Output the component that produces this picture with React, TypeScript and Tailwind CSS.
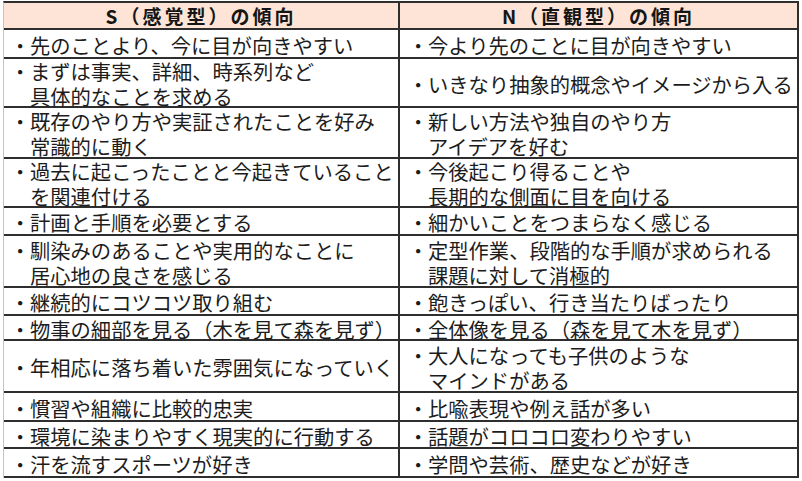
import React from "react";

type Row = { h: number; left: string[]; right: string[] };

const rows: Row[] = [
  { h: 29, left: ["先のことより、今に目が向きやすい"], right: ["今より先のことに目が向きやすい"] },
  { h: 49, left: ["まずは事実、詳細、時系列など", "具体的なことを求める"], right: ["いきなり抽象的概念やイメージから入る"] },
  { h: 51, left: ["既存のやり方や実証されたことを好み", "常識的に動く"], right: ["新しい方法や独自のやり方", "アイデアを好む"] },
  { h: 49, left: ["過去に起こったことと今起きていること", "を関連付ける"], right: ["今後起こり得ることや", "長期的な側面に目を向ける"] },
  { h: 28, left: ["計画と手順を必要とする"], right: ["細かいことをつまらなく感じる"] },
  { h: 52, left: ["馴染みのあることや実用的なことに", "居心地の良さを感じる"], right: ["定型作業、段階的な手順が求められる", "課題に対して消極的"] },
  { h: 28, left: ["継続的にコツコツ取り組む"], right: ["飽きっぽい、行き当たりばったり"] },
  { h: 25, left: ["物事の細部を見る（木を見て森を見ず）"], right: ["全体像を見る（森を見て木を見ず）"] },
  { h: 52, left: ["年相応に落ち着いた雰囲気になっていく"], right: ["大人になっても子供のような", "マインドがある"] },
  { h: 29, left: ["慣習や組織に比較的忠実"], right: ["比喩表現や例え話が多い"] },
  { h: 27, left: ["環境に染まりやすく現実的に行動する"], right: ["話題がコロコロ変わりやすい"] },
  { h: 29, left: ["汗を流すスポーツが好き"], right: ["学問や芸術、歴史などが好き"] },
];

function Cell({ lines, side }: { lines: string[]; side: "l" | "r" }) {
  return (
    <div
      className={
        side === "l"
          ? "w-[396px] h-full flex items-center pl-[6px] pt-[3px] border-r-2 border-[#2e2e2e]"
          : "w-[399px] h-full flex items-center pl-[8px] pt-[3px] border-r-2 border-[#2e2e2e]"
      }
    >
      <div className="flex leading-[25px]">
        <span className="w-[20px] shrink-0 text-center">・</span>
        <div className="flex flex-col whitespace-nowrap">
          {lines.map((t, i) => (
            <span key={i}>{t}</span>
          ))}
        </div>
      </div>
    </div>
  );
}

export default function App() {
  return (
    <div
      className="w-[802px] h-[481px] bg-white overflow-hidden pt-[1px]"
      style={{ fontFamily: '"Noto Sans CJK JP", "Noto Sans", sans-serif' }}
    >
      <div className="ml-[3px] w-[796px] border-l border-[#c4c4c4] border-t-2 border-t-[#2e2e2e] text-[20.3px] text-[#1c1c1c]">
        <div className="flex h-[27px] bg-[#fde4d6] border-b-2 border-[#2e2e2e] font-bold text-[#151515]">
          <div className="w-[396px] h-full flex items-center justify-center border-r-2 border-[#2e2e2e] text-[19px] tracking-[3px] pt-[1px]">
            S（感覚型）の傾向
          </div>
          <div className="w-[399px] h-full flex items-center justify-center border-r-2 border-[#2e2e2e] text-[19px] tracking-[3px] pt-[1px]">
            N（直観型）の傾向
          </div>
        </div>
        {rows.map((r, i) => (
          <div
            key={i}
            className="flex border-b-2 border-[#2e2e2e]"
            style={{ height: r.h }}
          >
            <Cell lines={r.left} side="l" />
            <Cell lines={r.right} side="r" />
          </div>
        ))}
      </div>
    </div>
  );
}
